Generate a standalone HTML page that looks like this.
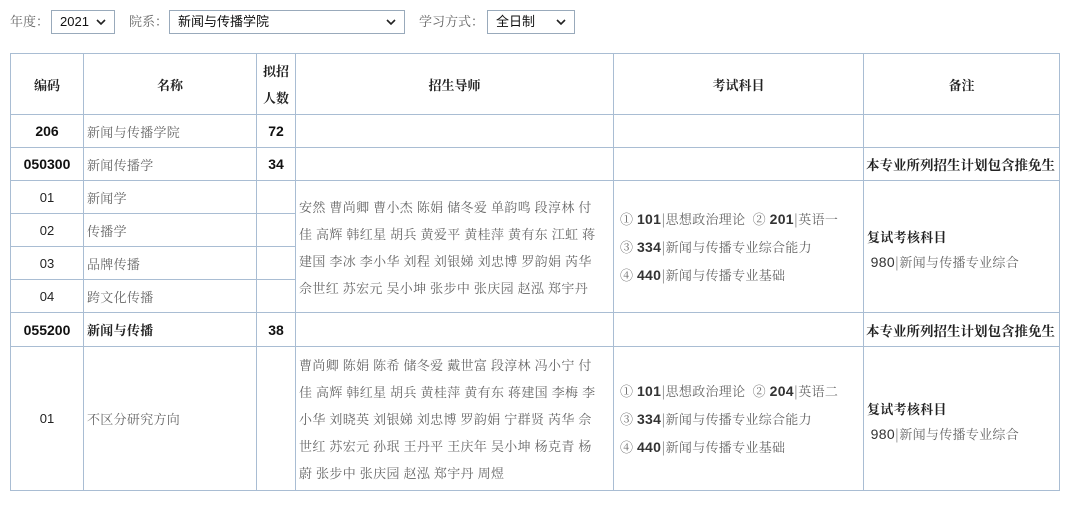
<!DOCTYPE html>
<html><head><meta charset="utf-8"><style>
body{margin:0;background:#fff;width:1080px;height:506px;overflow:hidden;font-family:"Liberation Sans","Noto Sans CJK SC",sans-serif;}
.top{position:absolute;top:10px;left:0;height:24px;font-size:13px;color:#666;}
.top span{position:absolute;top:1px;white-space:nowrap;font-family:"Noto Serif CJK SC",serif;}
.sel{position:absolute;top:0;border:1px solid #9ab;background:#fff;color:#111;font-size:13px;line-height:22px;padding-left:8px;box-sizing:border-box;height:24px}
.sel svg{position:absolute;right:8px;top:8px}
table{position:absolute;left:10px;top:53px;border-collapse:collapse;table-layout:fixed;}
td{border:1px solid #a9bdd3;padding:0;font-size:13px;color:#666;font-family:"Noto Serif CJK SC",serif;}
.h{font-weight:bold;color:#222;text-align:center;}
.c{text-align:center;}
.b{font-weight:bold;color:#111;font-family:"Liberation Sans",sans-serif;font-size:14px;}
.n{padding-left:3px;letter-spacing:0.3px}
.t{padding-left:3px;line-height:27px;letter-spacing:0.35px;white-space:nowrap}
.k{padding-left:6px;line-height:27px;letter-spacing:0.3px;white-space:nowrap}
.k b{color:#333;font-family:"Liberation Sans",sans-serif;font-size:14px;font-weight:bold}
.r{padding-left:3px;letter-spacing:0.3px}
.r .x{font-weight:bold;color:#222;line-height:30px}
.r b{color:#333;font-family:"Liberation Sans",sans-serif;font-size:14px;font-weight:normal}
.note{font-weight:bold;color:#222;padding-left:2px;white-space:nowrap;font-size:13.5px}
</style></head><body>
<div class="top">
<span style="left:10px">年度：</span>
<div class="sel" style="left:51px;width:64px">2021<svg width="10" height="7"><path d="M1 1L5 5L9 1" stroke="#222" stroke-width="1.6" fill="none"/></svg></div>
<span style="left:129px">院系：</span>
<div class="sel" style="left:169px;width:236px">新闻与传播学院<svg width="10" height="7"><path d="M1 1L5 5L9 1" stroke="#222" stroke-width="1.6" fill="none"/></svg></div>
<span style="left:419px">学习方式：</span>
<div class="sel" style="left:487px;width:88px">全日制<svg width="10" height="7"><path d="M1 1L5 5L9 1" stroke="#222" stroke-width="1.6" fill="none"/></svg></div>
</div>
<table>
<colgroup><col style="width:73px"><col style="width:173px"><col style="width:39px"><col style="width:318px"><col style="width:250px"><col style="width:196px"></colgroup>
<tr style="height:61px"><td class="h">编码</td><td class="h">名称</td><td class="h" style="line-height:27px">拟招<br>人数</td><td class="h">招生导师</td><td class="h">考试科目</td><td class="h">备注</td></tr>
<tr style="height:33px"><td class="c b">206</td><td class="n">新闻与传播学院</td><td class="c b">72</td><td></td><td></td><td></td></tr>
<tr style="height:33px"><td class="c b">050300</td><td class="n">新闻传播学</td><td class="c b">34</td><td></td><td></td><td class="note">本专业所列招生计划包含推免生</td></tr>
<tr style="height:33px"><td class="c" style="color:#222;font-family:'Liberation Sans',sans-serif">01</td><td class="n">新闻学</td><td></td>
<td rowspan="4" class="t">安然 曹尚卿 曹小杰 陈娟 储冬爱 单韵鸣 段淳林 付<br>佳 高辉 韩红星 胡兵 黄爱平 黄桂萍 黄有东 江虹 蒋<br>建国 李冰 李小华 刘程 刘银娣 刘忠博 罗韵娟 芮华<br>佘世红 苏宏元 吴小坤 张步中 张庆园 赵泓 郑宇丹</td>
<td rowspan="4" class="k">① <b>101</b>|思想政治理论 &nbsp;② <b>201</b>|英语一<br>③ <b>334</b>|新闻与传播专业综合能力<br>④ <b>440</b>|新闻与传播专业基础</td>
<td rowspan="4" class="r"><div class="x">复试考核科目</div>&nbsp;<b>980</b>|新闻与传播专业综合</td></tr>
<tr style="height:33px"><td class="c" style="color:#222;font-family:'Liberation Sans',sans-serif">02</td><td class="n">传播学</td><td></td></tr>
<tr style="height:33px"><td class="c" style="color:#222;font-family:'Liberation Sans',sans-serif">03</td><td class="n">品牌传播</td><td></td></tr>
<tr style="height:33px"><td class="c" style="color:#222;font-family:'Liberation Sans',sans-serif">04</td><td class="n">跨文化传播</td><td></td></tr>
<tr style="height:34px"><td class="c b">055200</td><td class="n" style="font-weight:bold;color:#222">新闻与传播</td><td class="c b">38</td><td></td><td></td><td class="note">本专业所列招生计划包含推免生</td></tr>
<tr style="height:144px"><td class="c" style="color:#222;font-family:'Liberation Sans',sans-serif">01</td><td class="n">不区分研究方向</td><td></td>
<td class="t">曹尚卿 陈娟 陈希 储冬爱 戴世富 段淳林 冯小宁 付<br>佳 高辉 韩红星 胡兵 黄桂萍 黄有东 蒋建国 李梅 李<br>小华 刘晓英 刘银娣 刘忠博 罗韵娟 宁群贤 芮华 佘<br>世红 苏宏元 孙珉 王丹平 王庆年 吴小坤 杨克青 杨<br>蔚 张步中 张庆园 赵泓 郑宇丹 周煜</td>
<td class="k">① <b>101</b>|思想政治理论 &nbsp;② <b>204</b>|英语二<br>③ <b>334</b>|新闻与传播专业综合能力<br>④ <b>440</b>|新闻与传播专业基础</td>
<td class="r"><div class="x">复试考核科目</div>&nbsp;<b>980</b>|新闻与传播专业综合</td></tr>
</table>
</body></html>
